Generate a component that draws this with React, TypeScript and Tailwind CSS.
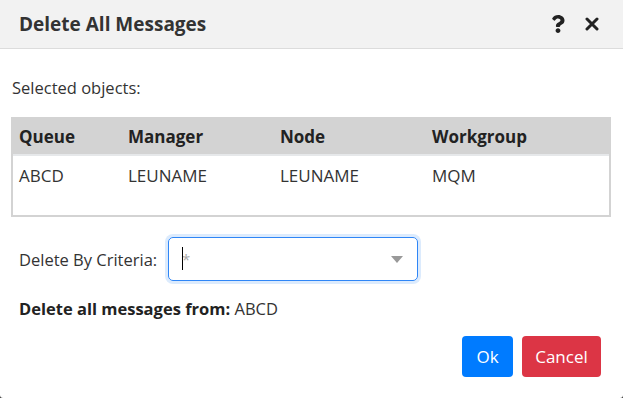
import { useState } from 'react'
import { FaQuestion } from 'react-icons/fa'

const COLUMNS = ['Queue', 'Manager', 'Node', 'Workgroup']
const ROWS = [['ABCD', 'LEUNAME', 'LEUNAME', 'MQM']]

export default function App() {
  const [criteria, setCriteria] = useState('')

  return (
    <div className="w-[623px] h-[398px] bg-[#3a3a3a] font-['Open_Sans',sans-serif] text-[#212529]">
      <div className="w-full h-full bg-white rounded-b-[3px] flex flex-col">
        {/* Header */}
        <div className="h-[49px] shrink-0 bg-[#f2f2f2] border-b border-[#dcdcdc] flex items-center pl-[19px] pr-[24px]">
          <h1 className="text-[19px] leading-[24px] font-bold text-[#333] -mt-[1px]">Delete All Messages</h1>
          <div className="ml-auto flex items-center gap-[18px] text-[#222]">
            <FaQuestion size={18} />
            <svg width="14" height="14" viewBox="0 0 14 14">
              <path d="M2 2 L12 12 M12 2 L2 12" stroke="#222" strokeWidth="3" strokeLinecap="round" />
            </svg>
          </div>
        </div>

        {/* Body */}
        <div className="px-[11px] pt-[27px] flex flex-col text-[16.5px] leading-[24px] text-[#333]">
          <p className="pl-[1px]">Selected objects:</p>

          <div className="mt-[17px] h-[100px] w-[600px] border-2 border-[#d3d3d3]">
            <div className="grid grid-cols-[109px_152px_152px_1fr] bg-[#d3d3d3] h-[35px] items-center pl-[6px] text-[17px]">
              {COLUMNS.map((c) => (
                <span key={c} className="font-bold text-[#222]">{c}</span>
              ))}
            </div>
            <div className="h-[2px] bg-[#e6e8ea]" />
            {ROWS.map((r, i) => (
              <div key={i} className="grid grid-cols-[109px_152px_152px_1fr] h-[40px] items-center pl-[6px] text-[17px]">
                {r.map((v, j) => (
                  <span key={j}>{v}</span>
                ))}
              </div>
            ))}
          </div>

          <div className="mt-[20px] flex items-center pl-[8px]">
            <label className="w-[149px] mt-[2px]">Delete By Criteria:</label>
            <div className="relative w-[250px] h-[44px] rounded-[5px] border border-[#2f86f6] ring-[3px] ring-[#dcebfd] flex items-center">
              <span className="absolute left-[13px] top-[9px] w-[1px] h-[23px] bg-black" />
              <input
                value={criteria}
                onChange={(e) => setCriteria(e.target.value)}
                placeholder="*"
                className="w-full h-full bg-transparent pl-[13px] pr-[36px] text-[15px] outline-none placeholder-[#aaa]"
              />
              <svg width="12" height="7" viewBox="0 0 12 7" className="absolute right-[14px] top-[18px]">
                <path d="M0 0 H12 L6 7 Z" fill="#999" />
              </svg>
            </div>
          </div>

          <p className="mt-[16px] pl-[8px]">
            <span className="font-bold text-[#222]">Delete all messages from:</span> ABCD
          </p>

          <div className="mt-[15px] flex justify-end gap-[9px] pr-[11px]">
            <button className="h-[41px] w-[51px] rounded-[4px] bg-[#007bff] text-white text-[17px]">Ok</button>
            <button className="h-[41px] w-[79px] rounded-[4px] bg-[#dc3545] text-white text-[17px]">Cancel</button>
          </div>
        </div>
      </div>
    </div>
  )
}
